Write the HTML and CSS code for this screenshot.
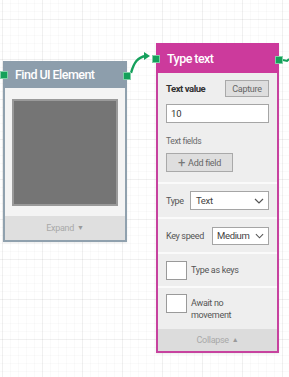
FILE: index.html
```html
<!DOCTYPE html>
<html>
<head>
<meta charset="utf-8">
<link rel="stylesheet" href="styles.css">
</head>
<body>
<div class="canvas">
  <svg class="wires" width="289" height="377" viewBox="0 0 289 377">
    <path d="M131 73 C 134 62, 138 57, 146 56" fill="none" stroke="#15a05c" stroke-width="2.4"/>
    <path d="M144 52 L150 56 L144 60 Z" fill="#15a05c"/>
    <path d="M283 60 L287 61 L289 59" fill="none" stroke="#15a05c" stroke-width="2"/>
  </svg>

  <div class="node node-find">
    <div class="node-head head-grey">Find UI Element</div>
    <div class="find-body">
      <div class="preview"></div>
    </div>
    <div class="node-foot">Expand <span class="tri">▼</span></div>
  </div>

  <div class="node node-type">
    <div class="node-head head-pink">Type text</div>
    <div class="type-body">
      <div class="sec sec-first">
        <div class="row-between">
          <span class="lbl-bold">Text value</span>
          <span class="btn btn-capture">Capture</span>
        </div>
        <div class="input">10</div>
        <div class="lbl-small">Text fields</div>
        <span class="btn btn-add"><span class="plus">+</span> Add field</span>
      </div>
      <div class="sec sec-row">
        <span class="lbl">Type</span>
        <div class="select sel-type"><span>Text</span>
          <svg width="10" height="6" viewBox="0 0 10 6"><path d="M1 1 L5 5 L9 1" fill="none" stroke="#555" stroke-width="1.2"/></svg>
        </div>
      </div>
      <div class="sec sec-row">
        <span class="lbl">Key speed</span>
        <div class="select sel-speed"><span>Medium</span>
          <svg width="9" height="6" viewBox="0 0 10 6"><path d="M1 1 L5 5 L9 1" fill="none" stroke="#555" stroke-width="1.2"/></svg>
        </div>
      </div>
      <div class="sec sec-check">
        <span class="check"></span>
        <span class="check-lbl">Type as keys</span>
      </div>
      <div class="sec sec-check sec-last">
        <span class="check"></span>
        <span class="check-lbl">Await no<br>movement</span>
      </div>
    </div>
    <div class="node-foot">Collapse <span class="tri">▲</span></div>
  </div>

  <span class="port port-a"></span>
  <span class="port port-b"></span>
  <span class="port port-c"></span>
  <span class="port port-d"></span>
</div>
</body>
</html>
```
FILE: styles.css
```css
* { box-sizing: border-box; }
html, body { margin: 0; padding: 0; }
body {
  width: 289px;
  height: 377px;
  overflow: hidden;
  background-color: #ffffff;
  font-family: "Roboto", "Liberation Sans", sans-serif;
}
.canvas {
  position: relative;
  width: 289px;
  height: 377px;
  background-color: #fff;
  background-image:
    linear-gradient(to right, rgba(0,0,0,0.04) 1px, transparent 1px),
    linear-gradient(to bottom, rgba(0,0,0,0.04) 1px, transparent 1px),
    linear-gradient(to right, rgba(0,0,0,0.018) 1px, transparent 1px),
    linear-gradient(to bottom, rgba(0,0,0,0.018) 1px, transparent 1px);
  background-size: 40px 40px, 40px 40px, 8px 8px, 8px 8px;
  background-position: 2px 19px, 2px 19px, 2px 3px, 2px 3px;
}
.wires { position: absolute; left: 0; top: 0; }

.node {
  position: absolute;
  display: flex;
  flex-direction: column;
  border: 2px solid;
  box-shadow: 0 1px 2px rgba(0,0,0,0.08);
}
.node-find {
  left: 3px; top: 61px; width: 124px; height: 181px;
  border-color: #90a1ae;
  background: #f4f4f4;
}
.node-type {
  left: 156px; top: 43px; width: 123px; height: 310px;
  border-color: #c7429f;
  background: #eeeeee;
}
.node-head {
  color: #fff;
  font-size: 12.5px;
  font-weight: 500;
  display: flex;
  align-items: center;
  letter-spacing: -0.55px;
}
.head-grey { background: #8d9eac; height: 27px; margin: -2px -2px 0; padding-left: 12px; }
.head-pink { background: #cc3a9c; height: 30px; margin: -2px -2px 0; padding-left: 11px; }

.find-body {
  flex: 1;
  padding: 11px 7px 10px 7px;
  display: flex;
}
.preview {
  flex: 1;
  background: #757575;
  border: 2px solid #9a9a9a;
}

.node-foot {
  height: 24px;
  background: #dfdfdf;
  color: #a9a9a9;
  font-size: 9px;
  letter-spacing: -0.3px;
  display: flex;
  align-items: center;
  justify-content: center;
  gap: 3px;
}
.node-type .node-foot { height: 22px; background: #dcdcdc; }
.tri { font-size: 7px; color: #9a9a9a; }

.type-body { flex: 1; display: flex; flex-direction: column; }
.sec {
  padding: 0 8px;
  border-bottom: 2px solid #fafafa;
}
.sec-last { border-bottom: none; flex: 1; }
.sec-first {
  display: flex;
  flex-direction: column;
  align-items: flex-start;
  padding-top: 7px;
  padding-bottom: 6px;
  height: 111px;
}
.row-between {
  width: 100%;
  display: flex;
  justify-content: space-between;
  align-items: center;
  height: 17px;
}
.lbl-bold { font-weight: bold; font-size: 9.5px; color: #333; letter-spacing: -0.45px; }
.btn {
  display: inline-flex;
  align-items: center;
  justify-content: center;
  background: #dedede;
  border: 1px solid #a9a9a9;
  color: #666;
  font-size: 9px;
  letter-spacing: -0.3px;
}
.btn-capture { width: 44px; height: 17px; }
.input {
  margin-top: 7px;
  width: 100%;
  height: 19px;
  background: #fff;
  border: 1px solid #a5a5a5;
  font-size: 9.5px;
  color: #333;
  padding-left: 4px;
  display: flex;
  align-items: center;
}
.lbl-small { margin-top: 13px; font-size: 8.5px; color: #6a6a6a; letter-spacing: -0.35px; }
.btn-add { margin-top: 7px; width: 67px; height: 19px; gap: 3px; color: #666; }
.plus { font-size: 13px; line-height: 10px; color: #777; }

.sec-row {
  display: flex;
  align-items: center;
  justify-content: space-between;
  height: 35px;
}
.lbl { font-size: 9px; color: #555; letter-spacing: -0.35px; }
.select {
  height: 19px;
  background: #fff;
  border: 1px solid #a5a5a5;
  display: flex;
  align-items: center;
  justify-content: space-between;
  padding: 0 4px 0 5px;
  font-size: 9.5px;
  letter-spacing: -0.35px;
  color: #444;
}
.sel-type { width: 79px; }
.sel-speed { width: 57px; height: 18px; padding-left: 4px; }

.sec-check {
  display: flex;
  align-items: flex-start;
  gap: 4px;
  height: 34px;
  padding-top: 7px;
}
.sec-last { padding-top: 6px; }
.check {
  width: 21px;
  height: 19px;
  background: #fff;
  border: 1px solid #9a9a9a;
  flex-shrink: 0;
}
.check-lbl { font-size: 9px; color: #555; line-height: 12px; padding-top: 3px; letter-spacing: -0.3px; }

.port {
  position: absolute;
  width: 8px;
  height: 8px;
  background: #14a05a;
  border: 1px solid #7fd0a6;
}
.port-a { left: 0; top: 71px; }
.port-b { left: 123px; top: 72px; }
.port-c { left: 152px; top: 55px; }
.port-d { left: 275px; top: 56px; }
```
